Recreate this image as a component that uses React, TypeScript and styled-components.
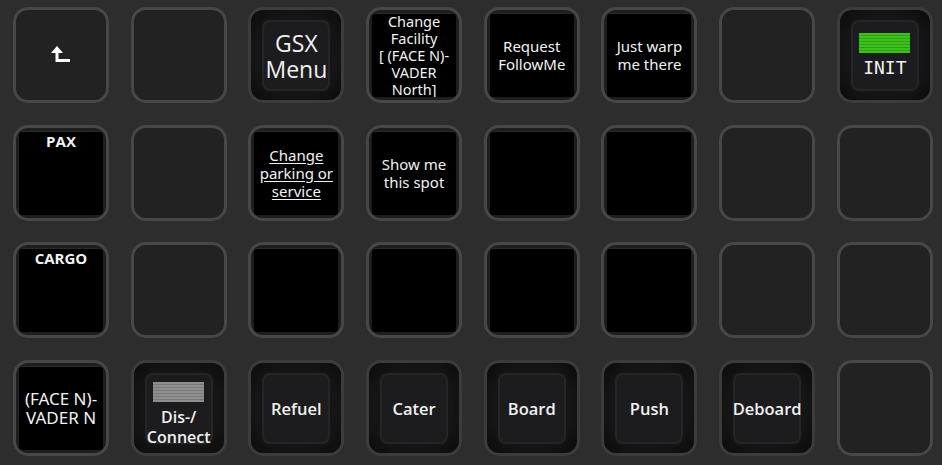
import React from "react";
import styled, { createGlobalStyle, css } from "styled-components";

type KeyDef =
  | { kind: "empty" }
  | { kind: "back" }
  | { kind: "screen"; lines?: string[]; size?: number; top?: boolean; bold?: boolean; underline?: boolean; lh?: number }
  | {
      kind: "cap";
      lines: string[];
      size?: number;
      bar?: "green" | "gray";
      mono?: boolean;
      weight?: number;
      lh?: number;
      shift?: number;
    };

const keys: KeyDef[] = [
  { kind: "back" },
  { kind: "empty" },
  { kind: "cap", lines: ["GSX", "Menu"], size: 23, weight: 400, lh: 26 },
  { kind: "screen", lines: ["Change", "Facility", "[ (FACE N)-", "VADER", "North]"], size: 14.5, lh: 17 },
  { kind: "screen", lines: ["Request", "FollowMe"] },
  { kind: "screen", lines: ["Just warp", "me there"] },
  { kind: "empty" },
  { kind: "cap", lines: ["INIT"], size: 18, bar: "green", mono: true, weight: 400 },

  { kind: "screen", lines: ["PAX"], top: true, bold: true },
  { kind: "empty" },
  { kind: "screen", lines: ["Change", "parking or", "service"], underline: true },
  { kind: "screen", lines: ["Show me", "this spot"] },
  { kind: "screen" },
  { kind: "screen" },
  { kind: "empty" },
  { kind: "empty" },

  { kind: "screen", lines: ["CARGO"], top: true, bold: true },
  { kind: "empty" },
  { kind: "screen" },
  { kind: "screen" },
  { kind: "screen" },
  { kind: "screen" },
  { kind: "empty" },
  { kind: "empty" },

  { kind: "screen", lines: ["(FACE N)-", "VADER N"], size: 17, lh: 19 },
  { kind: "cap", lines: ["Dis-/", "Connect"], size: 16, bar: "gray", lh: 20, shift: 12 },
  { kind: "cap", lines: ["Refuel"] },
  { kind: "cap", lines: ["Cater"] },
  { kind: "cap", lines: ["Board"] },
  { kind: "cap", lines: ["Push"] },
  { kind: "cap", lines: ["Deboard"] },
  { kind: "empty" },
];

function Lines({ lines }: { lines: string[] }) {
  return (
    <>
      {lines.map((l, i) => (
        <React.Fragment key={i}>
          {i > 0 && <br />}
          {l}
        </React.Fragment>
      ))}
    </>
  );
}

function BackIcon() {
  return (
    <svg width="24" height="20" viewBox="0 0 24 20">
      <polygon points="8,1 14,8 2,8" fill="#fff" />
      <path d="M8 6 V15.5 H21" fill="none" stroke="#fff" strokeWidth="3" />
    </svg>
  );
}

function Key({ def }: { def: KeyDef }) {
  if (def.kind === "empty") return <EmptyKey />;
  if (def.kind === "back")
    return (
      <EmptyKey>
        <BackIcon />
      </EmptyKey>
    );
  if (def.kind === "screen")
    return (
      <ScreenKey>
        <Screen $top={def.top}>
          {def.lines && (
            <ScreenText
              $size={def.size ?? 15}
              $lh={def.lh ?? 18}
              $bold={def.bold}
              $underline={def.underline}
            >
              <Lines lines={def.lines} />
            </ScreenText>
          )}
        </Screen>
      </ScreenKey>
    );
  return (
    <CapKey>
      <Face $bar={!!def.bar} $shift={def.shift ?? 0}>
        {def.bar && <Bar $color={def.bar} />}
        <CapText
          $size={def.size ?? 16.5}
          $lh={def.lh ?? 20}
          $mono={def.mono}
          $weight={def.weight ?? 600}
        >
          <Lines lines={def.lines} />
        </CapText>
      </Face>
    </CapKey>
  );
}

export default function App() {
  return (
    <>
      <GlobalStyle />
      <Deck>
        {keys.map((k, i) => (
          <Key key={i} def={k} />
        ))}
      </Deck>
    </>
  );
}

const GlobalStyle = createGlobalStyle`
  html, body {
    margin: 0;
    background: #2d2d2d;
    font-family: "Noto Sans", sans-serif;
  }
`;

const Deck = styled.div`
  display: grid;
  grid-template-columns: repeat(8, 96px);
  grid-auto-rows: 96px;
  gap: 21.7px;
  padding: 7px 0 0 13px;
  width: 942px;
  height: 465px;
  box-sizing: border-box;
`;

const keyBase = css`
  box-sizing: border-box;
  border: 3px solid #474747;
  border-radius: 15px;
  overflow: hidden;
  display: flex;
  align-items: center;
  justify-content: center;
`;

const EmptyKey = styled.div`
  ${keyBase};
  background: #222222;
`;

const ScreenKey = styled.div`
  ${keyBase};
  background: #1e1e1e;
  padding: 3px;
`;

const Screen = styled.div<{ $top?: boolean }>`
  width: 100%;
  height: 100%;
  background: #000;
  border-radius: 3px;
  box-shadow: inset 0 1px 0 #2a2a2a;
  display: flex;
  justify-content: center;
  align-items: ${(p) => (p.$top ? "flex-start" : "center")};
  padding-top: ${(p) => (p.$top ? "1px" : "0")};
  box-sizing: border-box;
  overflow: hidden;
`;

const ScreenText = styled.div<{ $size: number; $lh: number; $bold?: boolean; $underline?: boolean }>`
  color: #f2f2f2;
  font-family: ${(p) => (p.$bold ? '"Open Sans", sans-serif' : '"Noto Sans", sans-serif')};
  font-size: ${(p) => (p.$bold ? 15 : p.$size)}px;
  line-height: ${(p) => p.$lh}px;
  font-weight: ${(p) => (p.$bold ? 700 : 400)};
  text-decoration: ${(p) => (p.$underline ? "underline" : "none")};
  text-underline-offset: 2px;
  text-align: center;
  white-space: nowrap;
`;

const CapKey = styled.div`
  ${keyBase};
  border-color: #3c3c3c;
  background: radial-gradient(circle at 50% 50%, #1a1a1b 40%, #0c0c0c 100%);
  padding: 12px 13px 11px 13px;
`;

const Face = styled.div<{ $bar: boolean; $shift: number }>`
  width: 100%;
  height: 100%;
  box-sizing: border-box;
  border-radius: 6px;
  background: #1c1c1e;
  box-shadow: 0 0 0 2px #252527, 0 0 0 4px #151516;
  display: flex;
  flex-direction: column;
  align-items: center;
  justify-content: center;
  gap: ${(p) => (p.$bar ? "5px" : "0")};
  padding-top: ${(p) => Math.max(p.$shift, 0)}px;
  padding-bottom: ${(p) => Math.max(-p.$shift, 0)}px;
`;

const Bar = styled.div<{ $color: "green" | "gray" }>`
  width: 51px;
  height: 20px;
  flex: none;
  background: ${(p) =>
    p.$color === "green"
      ? "repeating-linear-gradient(#3cc01c 0 2px, #2fa315 2px 3px)"
      : "repeating-linear-gradient(#8e8e8e 0 2px, #7a7a7a 2px 3px)"};
`;

const CapText = styled.div<{ $size: number; $lh: number; $mono?: boolean; $weight: number }>`
  color: #f0f0f0;
  font-family: ${(p) => (p.$mono ? '"DejaVu Sans Mono", monospace' : '"Open Sans", sans-serif')};
  font-size: ${(p) => p.$size}px;
  font-weight: ${(p) => p.$weight};
  line-height: ${(p) => p.$lh}px;
  text-align: center;
  white-space: nowrap;
`;
